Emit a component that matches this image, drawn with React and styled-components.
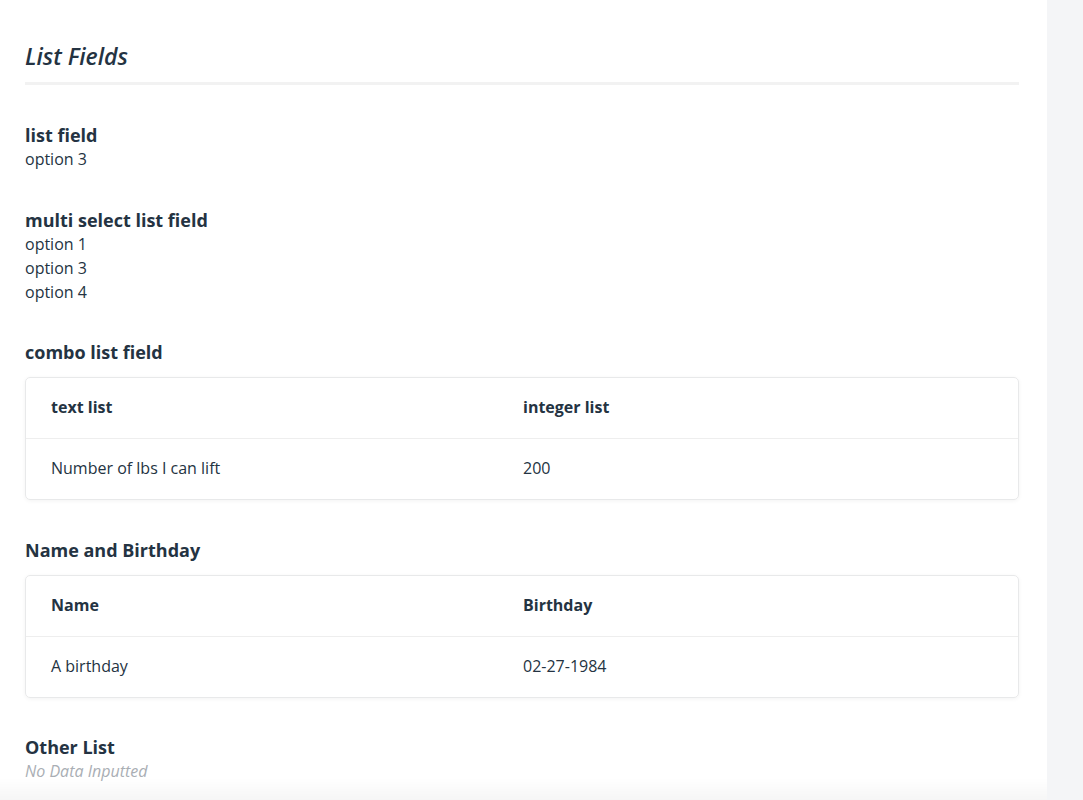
import React from 'react'
import styled, { createGlobalStyle } from 'styled-components';

const GlobalStyle = createGlobalStyle`
    html, body {
        margin: 0;
        padding: 0;
        background: #f4f5f7;
    }
    body {
        font-family: "Open Sans", "Noto Sans", sans-serif;
        color: #243342;
    }
`

const Page = styled.div`
    display: flex;
    min-height: 100vh;
`

const Main = styled.main`
    position: relative;
    width: 1047px;
    box-sizing: border-box;
    background: white;
    padding: 41px 28px 20px 25px;

    // soft fade at the bottom of the viewport
    &::after {
        content: '';
        position: fixed;
        left: 0;
        bottom: 0;
        width: 1047px;
        height: 22px;
        background: linear-gradient(rgba(0, 0, 0, 0), rgba(0, 0, 0, 0.035));
        pointer-events: none;
    }
`

const Side = styled.aside`
    flex: 1;
    background: #f4f5f7;
`

const Title = styled.h2`
    margin: 0;
    font-size: 23px;
    font-weight: 600;
    font-style: italic;
    line-height: 30px;
    padding-bottom: 11px;
    border-bottom: 3px solid #f2f2f2;
`

const Section = styled.section`
    margin-top: ${props => props.$gap ? props.$gap : 38}px;
`

const Label = styled.div`
    font-size: 18px;
    font-weight: 700;
    line-height: 23px;
    margin-bottom: ${props => props.table ? '13px' : '0'};
`

const Value = styled.div`
    font-size: 16px;
    line-height: 24px;
`

const Empty = styled(Value)`
    font-style: italic;
    color: #a9aeb4;
`

const Card = styled.div`
    border: 1px solid #e8e9ea;
    border-radius: 5px;
    box-shadow: 0 1px 4px rgba(0, 0, 0, 0.05);
    overflow: hidden;
`

const StyledTable = styled.table`
    width: 100%;
    border-collapse: collapse;
    table-layout: fixed;
`

const StyledTh = styled.th`
    width: ${props => props.$colWidth ? props.$colWidth : 'auto'};
    height: 57px;
    padding: 0 25px 3px;
    text-align: left;
    font-size: 16px;
    font-weight: 700;
    vertical-align: middle;
    border-bottom: 1px solid #eeeeee;
`

const StyledTd = styled.td`
    height: 57px;
    padding: 0 25px 3px;
    font-size: 16px;
    vertical-align: middle;
`

const ComboTable = ({ head, rows }) => (
    <Card>
        <StyledTable>
            <thead>
                <tr>
                    {head.map((h, i) => <StyledTh key={h} $colWidth={i === 0 ? '422px' : null}>{h}</StyledTh>)}
                </tr>
            </thead>
            <tbody>
                {rows.map((r, i) => (
                    <tr key={i}>
                        {r.map((c, j) => <StyledTd key={j}>{c}</StyledTd>)}
                    </tr>
                ))}
            </tbody>
        </StyledTable>
    </Card>
);

export default function App() {
    return (
        <Page>
            <GlobalStyle />
            <Main>
                <Title>List Fields</Title>

                <Section $gap={39}>
                    <Label>list field</Label>
                    <Value>option 3</Value>
                </Section>

                <Section $gap={38}>
                    <Label>multi select list field</Label>
                    {['option 1', 'option 3', 'option 4'].map(o => <Value key={o}>{o}</Value>)}
                </Section>

                <Section $gap={37}>
                    <Label table>combo list field</Label>
                    <ComboTable
                        head={['text list', 'integer list']}
                        rows={[['Number of lbs I can lift', '200']]}
                    />
                </Section>

                <Section $gap={39}>
                    <Label table>Name and Birthday</Label>
                    <ComboTable
                        head={['Name', 'Birthday']}
                        rows={[['A birthday', '02-27-1984']]}
                    />
                </Section>

                <Section $gap={38}>
                    <Label>Other List</Label>
                    <Empty>No Data Inputted</Empty>
                </Section>
            </Main>
            <Side />
        </Page>
    );
}
